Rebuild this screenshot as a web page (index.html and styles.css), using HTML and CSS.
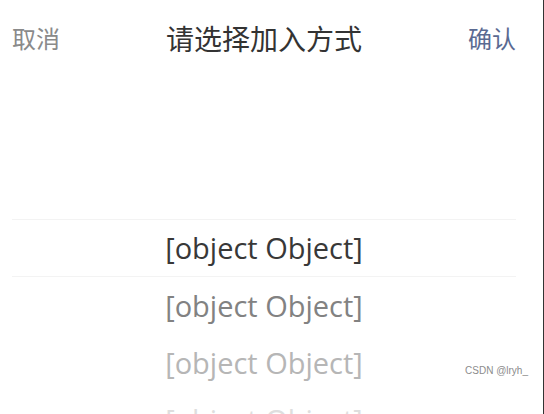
FILE: index.html
```html
<!DOCTYPE html>
<html lang="zh-CN">
<head>
<meta charset="utf-8">
<link rel="stylesheet" href="styles.css">
</head>
<body>
<div class="screen">
  <header class="bar">
    <span class="btn cancel">取消</span>
    <span class="title">请选择加入方式</span>
    <span class="btn ok">确认</span>
  </header>
  <div class="picker">
    <div class="item selected">[object Object]</div>
    <div class="item second">[object Object]</div>
    <div class="item third">[object Object]</div>
    <div class="item fourth">[object Object]</div>
  </div>
  <span class="watermark">CSDN @lryh_</span>
</div>
</body>
</html>
```
FILE: styles.css
```css
html, body {
  margin: 0;
  padding: 0;
  background: #fff;
  overflow: hidden;
}
.screen {
  position: relative;
  width: 543px;
  height: 414px;
  border-right: 1px solid #333;
  overflow: hidden;
  font-family: "Noto Sans CJK SC", "Noto Sans", sans-serif;
}
.bar {
  display: flex;
  align-items: center;
  justify-content: space-between;
  height: 76px;
  padding: 0 27px 0 12px;
}
.btn {
  font-size: 24px;
  line-height: 30px;
}
.cancel { color: #8a8a8a; }
.ok { color: #5a6a92; }
.title {
  font-size: 28px;
  line-height: 34px;
  color: #333;
}
.picker {
  display: flex;
  flex-direction: column;
  padding: 143px 30px 0 12px;
}
.item {
  height: 57px;
  line-height: 57px;
  text-align: center;
  font-family: "Open Sans", "Noto Sans", sans-serif;
  font-size: 29px;
  color: #383838;
  flex: none;
  margin-right: -3px;
}
.selected {
  height: 56px;
  line-height: 56px;
  border-top: 1px solid #f3f3f3;
  border-bottom: 1px solid #f3f3f3;
}
.second { color: #828282; }
.third { color: #b6b6b6; }
.fourth { color: #dedede; }
.watermark {
  position: absolute;
  right: 15px;
  top: 365px;
  font-family: "Liberation Sans", Arial, sans-serif;
  font-size: 10px;
  color: #8c8c8c;
}
```
